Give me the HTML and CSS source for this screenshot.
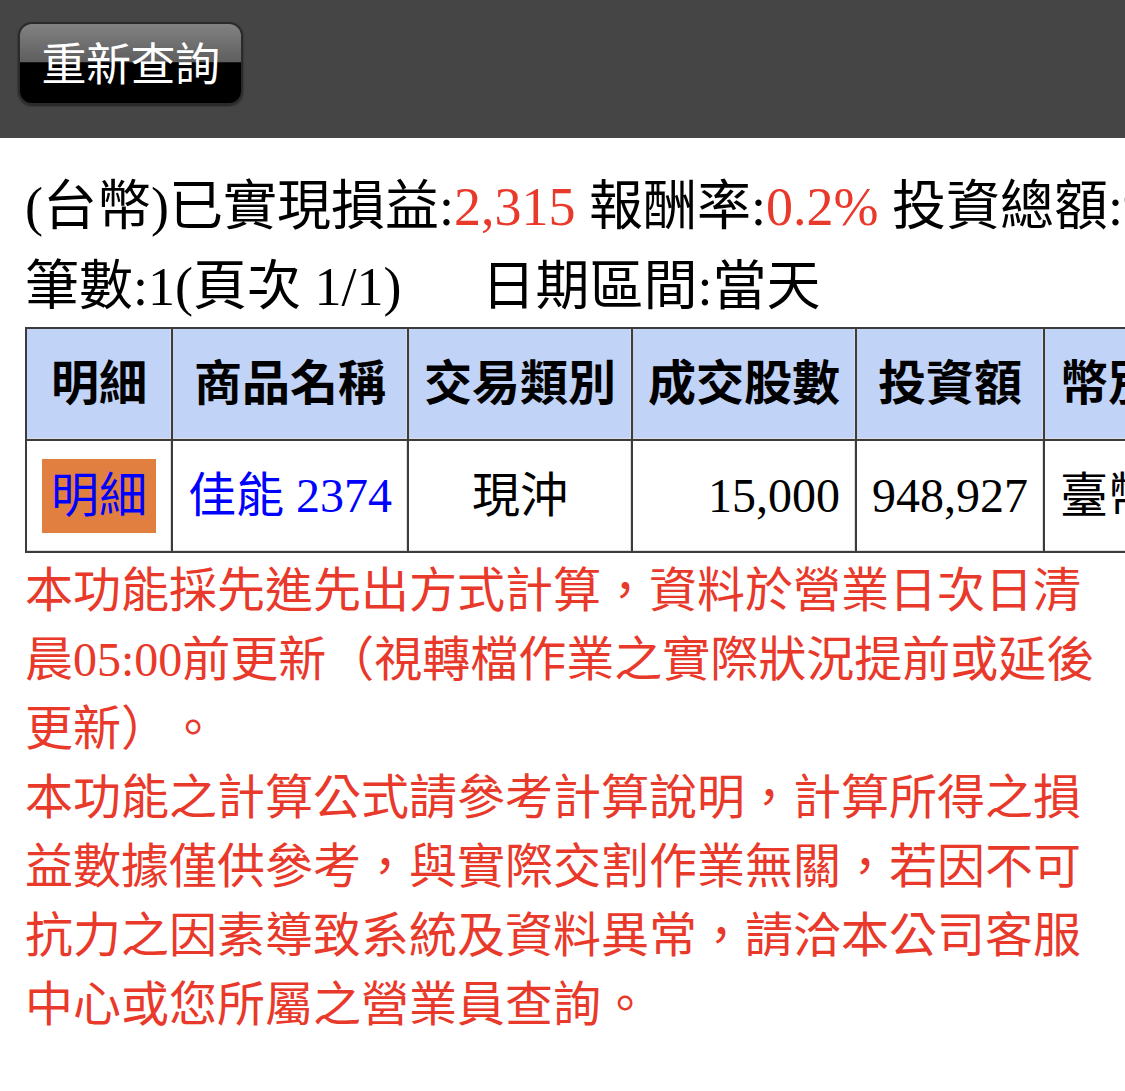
FILE: index.html
```html
<!DOCTYPE html>
<html lang="zh-Hant">
<head>
<meta charset="utf-8">
<title>已實現損益</title>
<link rel="stylesheet" href="styles.css">
</head>
<body>
<div class="topbar">
  <a class="btn" href="#">重新查詢</a>
</div>
<div class="content">
  <div class="summary">(台幣)已實現損益:<span class="red">2,315</span> 報酬率:<span class="red">0.2%</span> 投資總額:948,927</div>
  <div class="summary">筆數:1(頁次 1/1)<span class="range">日期區間:當天</span></div>
  <table class="grid">
    <thead>
      <tr>
        <th>明細</th>
        <th>商品名稱</th>
        <th>交易類別</th>
        <th>成交股數</th>
        <th>投資額</th>
        <th>幣別</th>
        <th>已實現損益</th>
      </tr>
    </thead>
    <tbody>
      <tr>
        <td><a class="detail" href="#">明細</a></td>
        <td><a class="stock" href="#">佳能 2374</a></td>
        <td class="center">現沖</td>
        <td class="num">15,000</td>
        <td class="num">948,927</td>
        <td class="center">臺幣</td>
        <td class="num">2,315</td>
      </tr>
    </tbody>
  </table>
  <p class="note">本功能採先進先出方式計算，資料於營業日次日清晨05:00前更新（視轉檔作業之實際狀況提前或延後更新）。<br>本功能之計算公式請參考計算說明，計算所得之損益數據僅供參考，與實際交割作業無關，若因不可抗力之因素導致系統及資料異常，請洽本公司客服中心或您所屬之營業員查詢。</p>
</div>
</body>
</html>
```

FILE: styles.css
```css
html, body {
  margin: 0;
  padding: 0;
  background: #ffffff;
}

body {
  font-family: "Liberation Serif", "Noto Sans CJK TC", serif;
  font-size: 48px;
  color: #000;
  overflow: hidden;
  text-spacing-trim: space-all;
}

.topbar {
  height: 138px;
  box-sizing: border-box;
  background: #454545;
  padding: 22px 18px;
}

.btn {
  display: inline-block;
  box-sizing: border-box;
  width: 225px;
  height: 83px;
  border-radius: 14px;
  border: 2px solid #2b2b2b;
  background: linear-gradient(to bottom, #828282 0%, #5e5e5e 48%, #000 49%, #000 100%);
  box-shadow: 0 1px 2px rgba(0, 0, 0, 0.5);
  color: #fff;
  text-decoration: none;
  font-family: "Noto Sans CJK TC", sans-serif;
  font-size: 45px;
  line-height: 75px;
  text-align: center;
  letter-spacing: -0.5px;
}

.content {
  padding: 29px 24px 0 25px;
}

.summary {
  font-size: 54px;
  line-height: 80px;
  height: 80px;
  white-space: nowrap;
}

.red {
  color: #e8392b;
}

.range {
  margin-left: 80px;
}

.grid {
  border-collapse: separate;
  border-spacing: 0;
  border-top: 2px solid #3c3c3c;
  border-left: 2px solid #3c3c3c;
  white-space: nowrap;
}

.grid th,
.grid td {
  padding: 15px;
  line-height: 80px;
  border-right: 2px solid #3c3c3c;
  border-bottom: 2px solid #3c3c3c;
  box-shadow: inset -1px -1px 0 #dcdcdc;
}

.grid th {
  background: #c1d3f7;
  font-weight: bold;
  text-align: center;
}

.grid td {
  background: #fff;
}

.grid .center {
  text-align: center;
}

.grid .num {
  text-align: right;
}

.detail {
  display: inline-block;
  background: #e17f40;
  color: #0000ff;
  text-decoration: none;
  padding: 2px 9px;
  line-height: 70px;
}

.stock {
  color: #0000ff;
  text-decoration: none;
}

.note {
  margin: 0;
  padding-top: 3px;
  color: #e8392b;
  line-height: 69px;
}
```
